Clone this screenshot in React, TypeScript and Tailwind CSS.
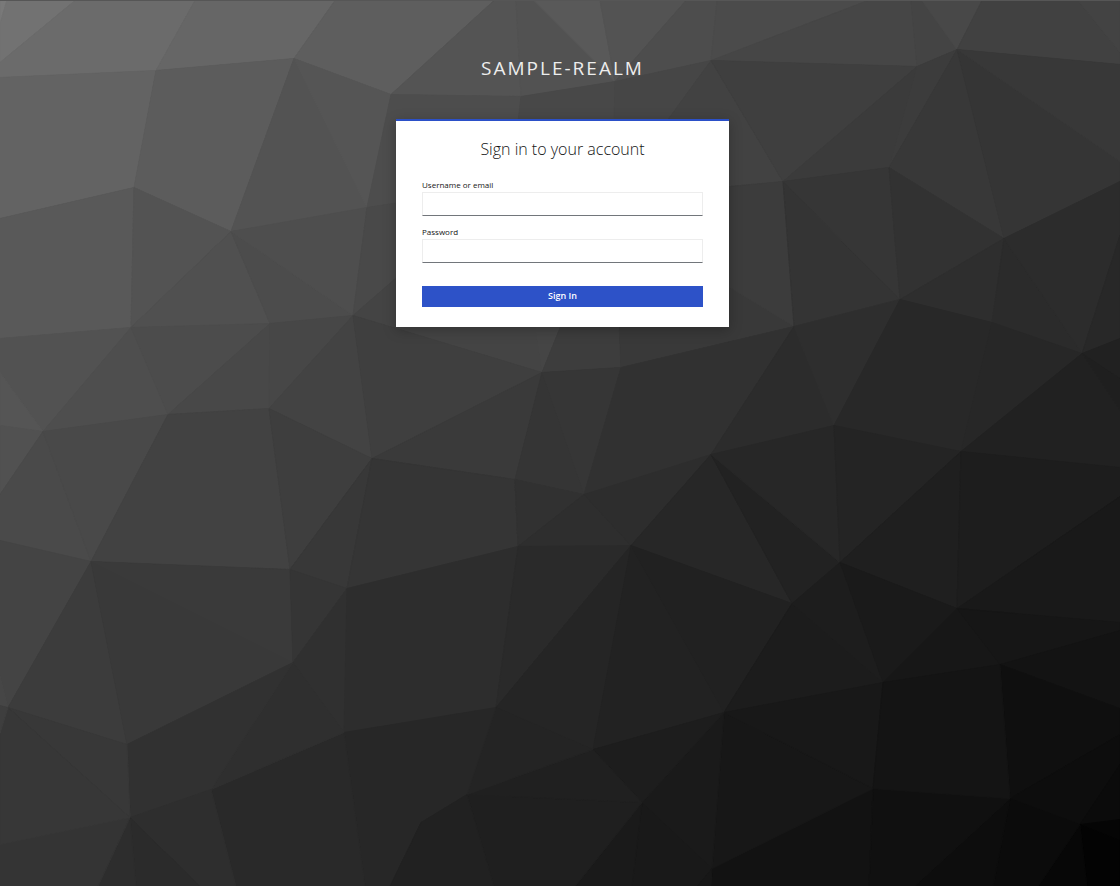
import { useState } from "react";

const FIELD =
  "block h-6 w-full border border-[#ededed] border-b-[#72767b] bg-white px-2 text-xs text-[#363636] outline-none focus:border-b-[#2b50c8]";

// Each facet of the backdrop: polygon points and its grey
const FACETS: [string, string][] = [
  ["0,0 7,0 0,23", "#757575"],
  ["7,0 75,0 0,62 0,23", "#6f6f6f"],
  ["75,0 195,0 156,70 0,77 0,62", "#686868"],
  ["195,0 335,0 294,58 156,70", "#636363"],
  ["335,0 494,0 391,94 294,58", "#5b5b5b"],
  ["494,0 516,0 521,96 391,94", "#525252"],
  ["516,0 534,0 615,81 521,96", "#505050"],
  ["534,0 600,0 615,81", "#565656"],
  ["600,0 686,0 615,81", "#515151"],
  ["686,0 717,0 711,60 615,81", "#4b4b4b"],
  ["717,0 868,0 711,60", "#494949"],
  ["868,0 911,0 917,66 711,60", "#444444"],
  ["911,0 922,0 957,49 917,66", "#424242"],
  ["922,0 982,0 957,49", "#464646"],
  ["982,0 1078,0 1120,52 1120,64 957,49", "#3f3f3f"],
  ["1078,0 1120,0 1120,52", "#414141"],
  ["0,77 156,70 134,187 0,218", "#606060"],
  ["156,70 294,58 231,231 134,187", "#595959"],
  ["294,58 367,207 231,231", "#515151"],
  ["294,58 391,94 367,207", "#535353"],
  ["391,94 521,96 517,130 400,202 367,207", "#4b4b4b"],
  ["521,96 615,81 614,130 517,130", "#464646"],
  ["615,81 711,60 660,130 614,130", "#444444"],
  ["711,60 783,181 720,187 660,130", "#404040"],
  ["711,60 917,66 783,181", "#3d3d3d"],
  ["917,66 889,167 783,181", "#393939"],
  ["917,66 957,49 889,167", "#3a3a3a"],
  ["957,49 1004,238 889,167", "#363636"],
  ["957,49 1120,161 1120,181 1004,238", "#333333"],
  ["957,49 1120,64 1120,161", "#363636"],
  ["0,218 134,187 131,327 0,338", "#565656"],
  ["134,187 231,231 131,327", "#515151"],
  ["231,231 270,323 131,327", "#4e4e4e"],
  ["231,231 353,315 270,323", "#4a4a4a"],
  ["231,231 367,207 353,315", "#4c4c4c"],
  ["367,207 400,202 400,274 353,315", "#474747"],
  ["353,315 400,274 534,320 542,372", "#424242"],
  ["534,320 563,320 542,372", "#434343"],
  ["563,320 619,320 621,367 542,372", "#3b3b3b"],
  ["619,320 720,281 794,326 621,367", "#373737"],
  ["720,187 783,181 794,326 720,281", "#3a3a3a"],
  ["783,181 900,299 794,326", "#323232"],
  ["783,181 889,167 900,299", "#343434"],
  ["889,167 1004,238 900,299", "#313131"],
  ["1004,238 992,322 900,299", "#2d2d2d"],
  ["1004,238 1082,353 992,322", "#2a2a2a"],
  ["1004,238 1120,181 1120,235 1082,353", "#2b2b2b"],
  ["1120,235 1120,338 1082,353", "#272727"],
  ["0,338 131,327 43,431 0,372", "#505050"],
  ["0,372 43,431 0,425", "#535353"],
  ["0,425 43,431 0,494", "#4f4f4f"],
  ["131,327 168,414 43,431", "#4c4c4c"],
  ["131,327 270,323 168,414", "#4a4a4a"],
  ["270,323 269,408 168,414", "#464646"],
  ["270,323 353,315 269,408", "#454545"],
  ["353,315 372,458 269,408", "#414141"],
  ["353,315 542,372 372,458", "#3d3d3d"],
  ["542,372 515,479 372,458", "#383838"],
  ["542,372 584,494 515,479", "#333333"],
  ["542,372 621,367 584,494", "#343434"],
  ["621,367 794,326 711,454 584,494", "#303030"],
  ["794,326 834,425 711,454", "#2b2b2b"],
  ["794,326 900,299 834,425", "#2d2d2d"],
  ["900,299 992,322 961,451 834,425", "#272727"],
  ["992,322 1082,353 961,451", "#262626"],
  ["1082,353 1120,338 1120,378", "#202020"],
  ["1082,353 1120,378 1120,410", "#1e1e1e"],
  ["1082,353 1120,410 1120,467 961,451", "#202020"],
  ["0,494 43,431 91,561 0,540", "#484848"],
  ["43,431 168,414 91,561", "#474747"],
  ["168,414 269,408 290,569 91,561", "#404040"],
  ["269,408 372,458 290,569", "#3c3c3c"],
  ["372,458 347,588 290,569", "#363636"],
  ["372,458 515,479 518,546 347,588", "#333333"],
  ["515,479 584,494 518,546", "#303030"],
  ["584,494 631,545 518,546", "#2d2d2d"],
  ["584,494 711,454 631,545", "#2c2c2c"],
  ["711,454 792,603 631,545", "#262626"],
  ["711,454 840,562 792,603", "#212121"],
  ["711,454 834,425 840,562", "#262626"],
  ["834,425 961,451 840,562", "#232323"],
  ["961,451 957,608 840,562", "#1e1e1e"],
  ["961,451 1120,467 1120,496 957,608", "#1c1c1c"],
  ["957,608 1120,496 1120,622", "#181818"],
  ["0,540 91,561 8,707 0,675", "#424242"],
  ["0,675 8,707 0,705", "#444444"],
  ["91,561 127,744 8,707", "#3a3a3a"],
  ["91,561 293,662 127,744", "#373737"],
  ["91,561 290,569 293,662", "#383838"],
  ["290,569 347,588 293,662", "#333333"],
  ["347,588 344,732 293,662", "#2f2f2f"],
  ["347,588 518,546 496,707 344,732", "#2c2c2c"],
  ["518,546 631,545 496,707", "#292929"],
  ["631,545 593,749 496,707", "#242424"],
  ["631,545 724,712 593,749", "#212121"],
  ["631,545 792,603 724,712", "#202020"],
  ["792,603 883,682 724,712", "#1b1b1b"],
  ["792,603 840,562 883,682", "#1c1c1c"],
  ["840,562 957,608 883,682", "#191919"],
  ["957,608 1000,664 883,682", "#161616"],
  ["957,608 1120,622 1120,630 1000,664", "#151515"],
  ["1000,664 1120,630 1120,708", "#121212"],
  ["1000,664 1120,708 1120,734 1010,798", "#0f0f0f"],
  ["1010,798 1120,734 1120,764 1080,824", "#0d0d0d"],
  ["1080,824 1120,764 1120,819", "#0b0b0b"],
  ["1080,824 1120,819 1120,840", "#050505"],
  ["1080,824 1120,840 1120,886 1087,886", "#030303"],
  ["1080,824 1087,886 1038,886", "#070707"],
  ["1010,798 1080,824 1038,886 993,886", "#0b0b0b"],
  ["1010,798 993,886 914,886", "#0d0d0d"],
  ["873,788 1010,798 914,886 869,886", "#101010"],
  ["712,868 873,788 869,886 711,886", "#111111"],
  ["724,712 873,788 712,868", "#161616"],
  ["724,712 883,682 873,788", "#171717"],
  ["883,682 1000,664 1010,798 873,788", "#131313"],
  ["724,712 712,868 642,802", "#191919"],
  ["593,749 724,712 642,802", "#1c1c1c"],
  ["642,802 712,868 697,886 632,886", "#181818"],
  ["712,868 711,886 697,886", "#161616"],
  ["642,802 632,886 575,886", "#191919"],
  ["467,794 642,802 575,886 494,886", "#1e1e1e"],
  ["467,794 593,749 642,802", "#1f1f1f"],
  ["496,707 593,749 467,794", "#232323"],
  ["344,732 496,707 467,794 421,822 390,886 365,886", "#262626"],
  ["421,822 467,794 494,886 390,886", "#202020"],
  ["211,789 344,732 365,886 236,886", "#282828"],
  ["293,662 344,732 211,789", "#2e2e2e"],
  ["293,662 211,789 130,817 127,744", "#303030"],
  ["130,817 211,789 236,886 200,886", "#2d2d2d"],
  ["130,817 200,886 136,886", "#2a2a2a"],
  ["130,817 136,886 98,886", "#2c2c2c"],
  ["130,817 98,886 0,886 0,844", "#323232"],
  ["8,707 127,744 130,817", "#363636"],
  ["8,707 130,817 0,844 0,733", "#353535"],
  ["0,705 8,707 0,733", "#3c3c3c"],
];

export default function App() {
  return (
    <div className="relative isolate min-h-screen border-t border-[#565656] bg-[#2a2a2a] font-['Open_Sans','Noto_Sans',sans-serif]">
      <Backdrop />
      <div className="flex flex-col items-center pl-[5px]">
        <header className="pt-[53px] pb-[37px]">
          <h1 className="text-[19px] leading-7 font-medium tracking-[2px] text-[#ededed] uppercase">
            sample-realm
          </h1>
        </header>
        <LoginCard />
      </div>
    </div>
  );
}

const Backdrop = () => {
  return (
    <svg
      aria-hidden="true"
      className="absolute inset-0 -z-10 h-full w-full brightness-103"
      viewBox="0 0 1120 886"
      preserveAspectRatio="xMidYMid slice"
    >
      {FACETS.map(([points, fill]) => (
        <polygon key={points} points={points} fill={fill} stroke={fill} />
      ))}
    </svg>
  );
};

const LoginCard = () => {
  const [username, setUsername] = useState("");
  const [password, setPassword] = useState("");

  return (
    <main className="w-full max-w-[333px] border-t-2 border-[#2b50c8] bg-white px-[26px] pt-4 pb-5 shadow-[0_3px_12px_rgba(0,0,0,0.25)]">
      <h2 className="text-center text-base leading-6 font-light text-[#151515]">
        Sign in to your account
      </h2>
      <form className="mt-[17px]" onSubmit={(e) => e.preventDefault()}>
        <div>
          <label
            htmlFor="username"
            className="block text-[8px] leading-[14px] text-[#151515]"
          >
            Username or email
          </label>
          <input
            id="username"
            type="text"
            value={username}
            onChange={(e) => setUsername(e.target.value)}
            className={FIELD}
          />
        </div>
        <div className="mt-[9px]">
          <label
            htmlFor="password"
            className="block text-[8px] leading-[14px] text-[#151515]"
          >
            Password
          </label>
          <input
            id="password"
            type="password"
            value={password}
            onChange={(e) => setPassword(e.target.value)}
            className={FIELD}
          />
        </div>
        <button
          type="submit"
          className="mt-[23px] block h-[21px] w-full bg-[#2d52c8] pb-0.5 text-[9px] leading-4 font-semibold text-white hover:bg-[#2443ab]"
        >
          Sign In
        </button>
      </form>
    </main>
  );
};
